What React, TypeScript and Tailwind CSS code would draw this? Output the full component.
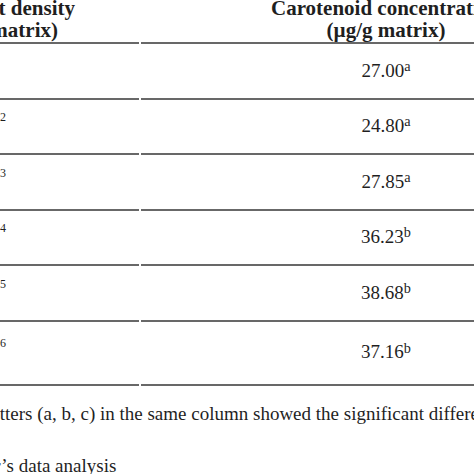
import React from 'react';

const rows = [
  { exp: '', value: '27.00', mark: 'a', h: 'h-[55.5px]' },
  { exp: '2', value: '24.80', mark: 'a', h: 'h-[55.5px]' },
  { exp: '3', value: '27.85', mark: 'a', h: 'h-[55.5px]' },
  { exp: '4', value: '36.23', mark: 'b', h: 'h-[55.5px]' },
  { exp: '5', value: '38.68', mark: 'b', h: 'h-[55.5px]' },
  { exp: '6', value: '37.16', mark: 'b', h: 'h-[64px]' },
];

const App: React.FC = () => {
  return (
    <div className="w-[474px] h-[474px] overflow-hidden bg-white text-[#1f1f1f] font-['Liberation_Serif','Times_New_Roman',serif]">
      {/* table is wider than the window; left side cut off */}
      <div className="-ml-[120px] -mt-[3px] w-[900px]">
        <div className="grid grid-cols-[259px_490px] gap-x-[2px]">
          <div className="flex flex-col items-end pb-[1px] border-b-2 border-[#686868] text-[21px] leading-[22px] font-bold whitespace-nowrap">
            <span className="mr-[64px]">Yeast density</span>
            <span className="mr-[81px]">(cells/g matrix)</span>
          </div>
          <div className="flex flex-col items-center pb-[1px] border-b-2 border-[#686868] text-[21px] leading-[22px] font-bold whitespace-nowrap">
            <span>Carotenoid concentration</span>
            <span>(µg/g matrix)</span>
          </div>

          {rows.map((r, i) => (
            <React.Fragment key={i}>
              <div className={`${r.h} flex items-center pl-[101px] border-b-2 border-[#686868] text-[19px]`}>
                {r.exp ? (
                  <span>
                    10<sup className="text-[12px] top-[-11px]">{r.exp}</sup>
                  </span>
                ) : (
                  <span className="-ml-[10px]">0</span>
                )}
              </div>
              <div className={`${r.h} flex items-center justify-center border-b-2 border-[#686868] text-[19px]`}>
                <span>
                  {r.value}
                  <sup className="top-[-0.4em]">{r.mark}</sup>
                </span>
              </div>
            </React.Fragment>
          ))}
        </div>
      </div>

      <div className="text-[19px] whitespace-nowrap">
        <p className="-ml-[88px] mt-[14px]">
          Different letters (a, b, c) in the same column showed the significant difference (p &lt; 0.05)
        </p>
        <p className="-ml-[115px] mt-[24px]">Source: Author’s data analysis</p>
      </div>
    </div>
  );
};

export default App;
